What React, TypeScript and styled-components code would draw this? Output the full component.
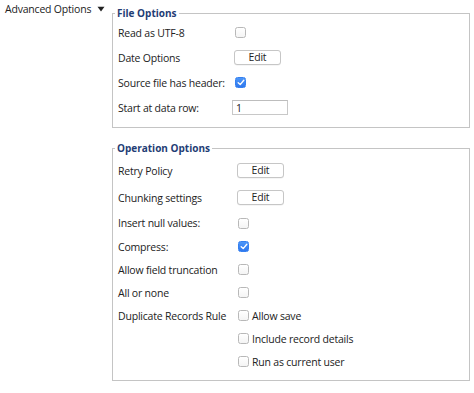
import React from 'react';
import styled, { createGlobalStyle } from 'styled-components';

const GlobalStyle = createGlobalStyle`
  body {
    margin: 0;
    background: #ffffff;
    font-family: "Open Sans", "Noto Sans", sans-serif;
    color: #222222;
  }
`;

const Page = styled.div`
  display: flex;
  align-items: flex-start;
  padding: 2px 0 0 5px;
`;

const Toggle = styled.div`
  display: flex;
  align-items: center;
  gap: 6px;
  width: 107px;
  flex-shrink: 0;
  font-size: 10.5px;
  letter-spacing: -0.2px;
  line-height: 14px;
  color: #222222;
`;

const Panels = styled.div`
  display: flex;
  flex-direction: column;
  gap: 13px;
  margin-top: 4px;
`;

const Group = styled.fieldset<{ $padTop?: number }>`
  box-sizing: border-box;
  width: 358px;
  margin: 0;
  min-width: 0;
  border: 1px solid #c4c4c4;
  padding: ${(p) => p.$padTop || 0}px 0 7px 5px;
`;

const Legend = styled.legend`
  margin-left: -3px;
  padding: 0 2px;
  font-size: 10px;
  line-height: 14px;
  font-weight: 700;
  color: #1f3d75;
`;

const Row = styled.div<{ $h: number; $labelWidth: number }>`
  display: grid;
  grid-template-columns: ${(p) => p.$labelWidth}px 1fr;
  align-items: start;
  min-height: ${(p) => p.$h}px;
`;

const Cell = styled.div<{ $h: number }>`
  display: flex;
  align-items: center;
  height: ${(p) => p.$h}px;
`;

const Label = styled.span`
  font-size: 10.5px;
  letter-spacing: -0.2px;
  white-space: nowrap;
`;

const Options = styled.div`
  display: flex;
  flex-direction: column;
`;

const OptionLine = styled.div`
  display: flex;
  align-items: center;
  gap: 3px;
  height: 23px;
  font-size: 10.5px;
  letter-spacing: -0.2px;
`;

const Box = styled.span<{ $checked?: boolean }>`
  box-sizing: border-box;
  display: inline-flex;
  align-items: center;
  justify-content: center;
  width: 11px;
  height: 11px;
  margin-left: 1px;
  border-radius: 2.5px;
  border: 1px solid ${(p) => (p.$checked ? '#3580f0' : '#b8b8b8')};
  background: ${(p) =>
    p.$checked ? 'linear-gradient(#4c96f8, #2f78ee)' : 'linear-gradient(#ffffff, #f4f4f4)'};
`;

const EditButton = styled.button`
  box-sizing: border-box;
  width: 47px;
  height: 15px;
  padding: 0;
  border: 1px solid #c6c6c6;
  border-radius: 3px;
  background: #ffffff;
  box-shadow: 0 0.5px 0.5px rgba(0, 0, 0, 0.08);
  font-family: inherit;
  font-size: 10.5px;
  letter-spacing: -0.2px;
  line-height: 13px;
  color: #222222;
`;

const NumberInput = styled.input`
  box-sizing: border-box;
  width: 56px;
  height: 15px;
  margin-left: -2px;
  padding: 0 3px;
  border: 1px solid #c8c8c8;
  border-top-color: #bdbdbd;
  border-radius: 0;
  font-family: inherit;
  font-size: 10.5px;
  color: #222222;
  outline: none;
`;

const Caret = () => (
  <svg width="8" height="6" viewBox="0 0 8 6">
    <path d="M0.5 0.8 L7.5 0.8 L4 5.5 Z" fill="#222222" />
  </svg>
);

const Checkbox = ({ checked }: { checked?: boolean }) => (
  <Box $checked={checked}>
    {checked && (
      <svg width="8" height="7" viewBox="0 0 8 7">
        <path d="M1.2 3.8 L3.2 5.6 L6.8 1.2" fill="none" stroke="#ffffff" strokeWidth="1.4" strokeLinecap="round" strokeLinejoin="round" />
      </svg>
    )}
  </Box>
);

type Control =
  | { kind: 'check'; checked?: boolean }
  | { kind: 'edit' }
  | { kind: 'input'; value: string }
  | { kind: 'options'; items: string[] };

interface Field {
  label: string;
  h: number;
  control: Control;
}

const fileFields: Field[] = [
  { label: 'Read as UTF-8', h: 25, control: { kind: 'check' } },
  { label: 'Date Options', h: 25, control: { kind: 'edit' } },
  { label: 'Source file has header:', h: 25, control: { kind: 'check', checked: true } },
  { label: 'Start at data row:', h: 25, control: { kind: 'input', value: '1' } },
];

const operationFields: Field[] = [
  { label: 'Retry Policy', h: 27, control: { kind: 'edit' } },
  { label: 'Chunking settings', h: 27, control: { kind: 'edit' } },
  { label: 'Insert null values:', h: 24, control: { kind: 'check' } },
  { label: 'Compress:', h: 23, control: { kind: 'check', checked: true } },
  { label: 'Allow field truncation', h: 23, control: { kind: 'check' } },
  { label: 'All or none', h: 23, control: { kind: 'check' } },
  {
    label: 'Duplicate Records Rule',
    h: 23,
    control: { kind: 'options', items: ['Allow save', 'Include record details', 'Run as current user'] },
  },
];

const renderControl = (c: Control, h: number) => {
  if (c.kind === 'options') {
    return (
      <Options>
        {c.items.map((item) => (
          <OptionLine key={item}>
            <Checkbox />
            {item}
          </OptionLine>
        ))}
      </Options>
    );
  }
  return (
    <Cell $h={h}>
      {c.kind === 'check' && <Checkbox checked={c.checked} />}
      {c.kind === 'edit' && <EditButton>Edit</EditButton>}
      {c.kind === 'input' && <NumberInput defaultValue={c.value} />}
    </Cell>
  );
};

const OptionGroup = ({
  title,
  fields,
  labelWidth,
  padTop,
}: {
  title: string;
  fields: Field[];
  labelWidth: number;
  padTop?: number;
}) => (
  <Group $padTop={padTop}>
    <Legend>{title}</Legend>
    {fields.map((f) => (
      <Row key={f.label} $h={f.h} $labelWidth={labelWidth}>
        <Cell $h={f.h}>
          <Label>{f.label}</Label>
        </Cell>
        {renderControl(f.control, f.h)}
      </Row>
    ))}
  </Group>
);

const App = () => (
  <>
    <GlobalStyle />
    <Page>
      <Toggle>
        Advanced Options
        <Caret />
      </Toggle>
      <Panels>
        <OptionGroup title="File Options" fields={fileFields} labelWidth={116} />
        <OptionGroup title="Operation Options" fields={operationFields} labelWidth={119} padTop={2} />
      </Panels>
    </Page>
  </>
);

export default App;
